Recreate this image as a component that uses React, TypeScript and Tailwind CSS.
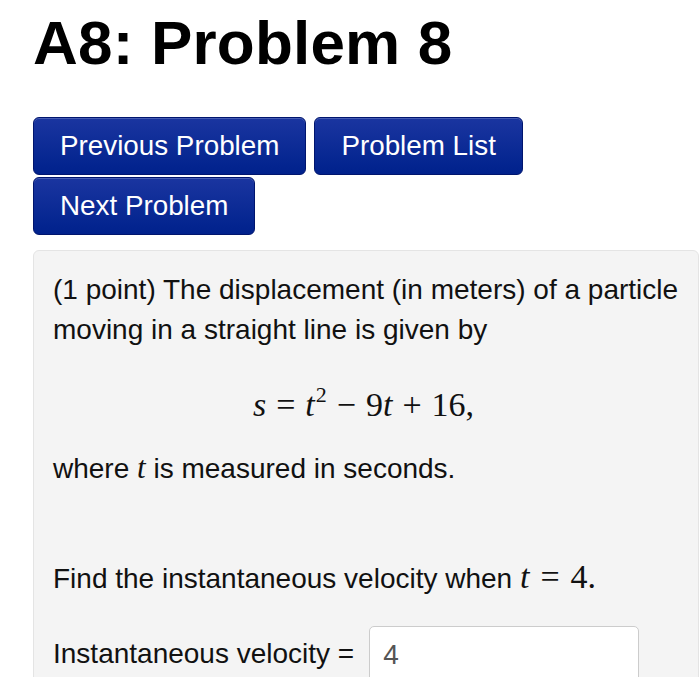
import React from "react";

const sans = { fontFamily: '"Liberation Sans", Arial, sans-serif' };
const serif = { fontFamily: '"Liberation Serif", "Times New Roman", serif' };

function NavButton({ label }: { label: string }) {
  return (
    <button className="h-[58px] px-[26px] rounded-[6px] border border-[#00156e] bg-gradient-to-b from-[#1a35a0] to-[#00218c] text-white text-[27.8px] leading-none shadow-[inset_0_1px_0_rgba(255,255,255,0.2)]">
      {label}
    </button>
  );
}

export default function App() {
  return (
    <div className="w-[700px] h-[677px] overflow-hidden bg-white text-[#111]" style={sans}>
      <div className="pl-[33px]">
        <h1 className="text-[62px] font-bold leading-none pt-[12px] tracking-[0.2px] text-black">A8: Problem 8</h1>
        <div className="mt-[43px] flex flex-wrap gap-x-[8px] gap-y-[2px] w-[500px]">
          <NavButton label="Previous Problem" />
          <NavButton label="Problem List" />
          <NavButton label="Next Problem" />
        </div>
        <div className="mt-[15px] w-[666px] h-[460px] bg-[#f4f4f4] border border-[#e4e4e4] rounded-[6px] pl-[19px] pt-[19px] text-[28px] leading-[40px]">
          <p>(1 point) The displacement (in meters) of a particle moving in a straight line is given by</p>
          <p className="mt-[35px] text-center pr-[24px] text-[34px]" style={serif}>
            <i>s</i>
            <span className="mx-[10px]">=</span>
            <i>t</i>
            <sup className="text-[22px] -top-[14px] ml-[1px]">2</sup>
            <span className="mx-[10px]">−</span>9<i>t</i>
            <span className="mx-[10px]">+</span>16,
          </p>
          <p className="mt-[23px]">
            where <i style={serif} className="text-[31px]">t</i> is measured in seconds.
          </p>
          <p className="mt-[68px]">
            Find the instantaneous velocity when{" "}
            <span style={serif} className="text-[34px]">
              <i>t</i>
              <span className="mx-[11px]">=</span>4.
            </span>
          </p>
          <div className="mt-[27px] flex items-start">
            <span className="mt-[8px]">Instantaneous velocity =</span>
            <div className="ml-[15px] w-[270px] h-[56px] bg-white border border-[#cccccc] rounded-[5px] pl-[13px] pt-[8px] text-[#555]">4</div>
          </div>
        </div>
      </div>
    </div>
  );
}
